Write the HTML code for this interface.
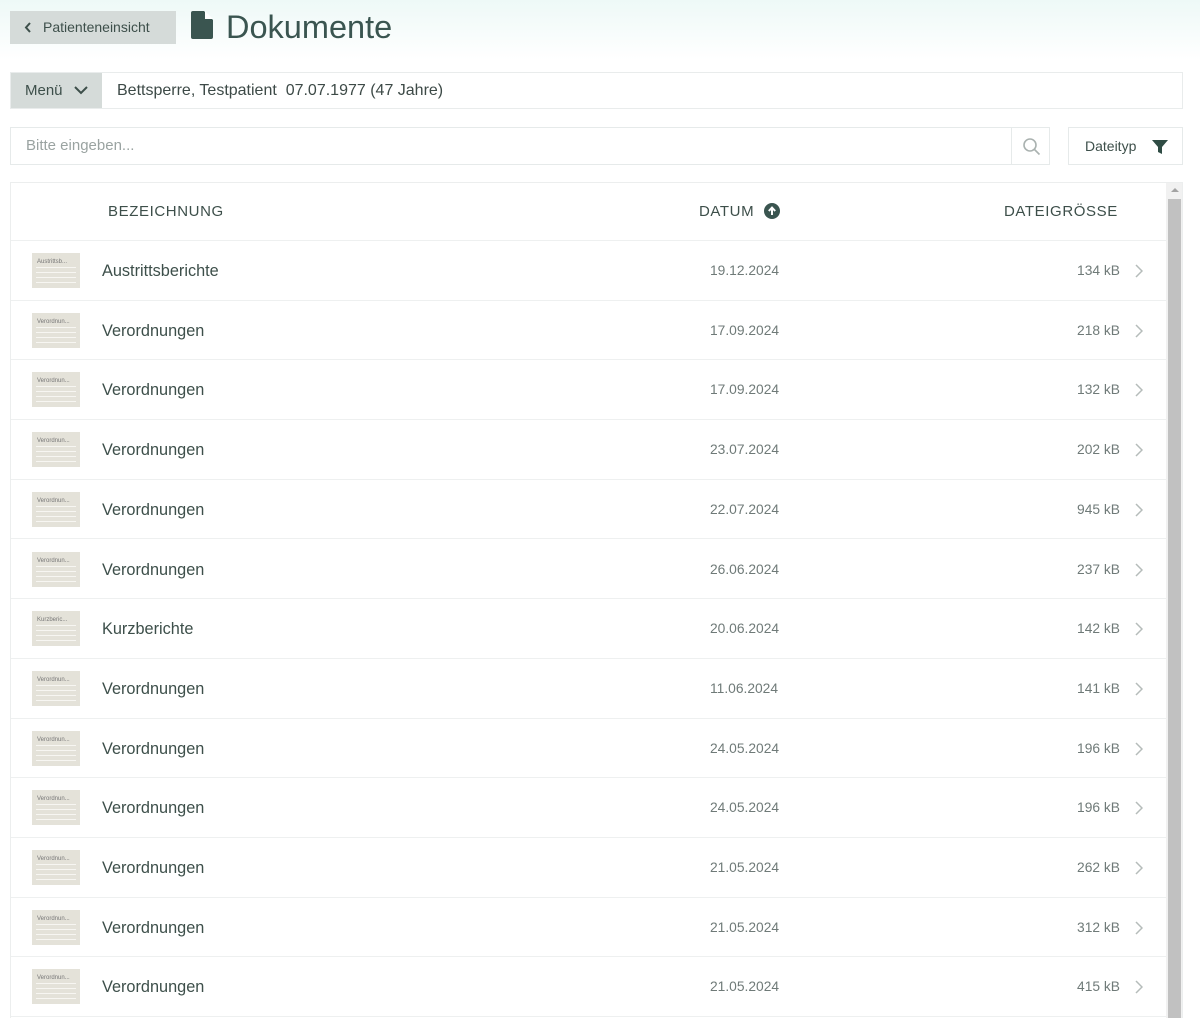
<!DOCTYPE html>
<html><head><meta charset="utf-8"><style>
*{box-sizing:border-box;margin:0;padding:0}
html,body{width:1200px;height:1018px;overflow:hidden}
body{background:#fff;font-family:"Liberation Sans",sans-serif;color:#3d4f4a;position:relative}
.topbg{position:absolute;left:0;top:0;width:1200px;height:60px;background:linear-gradient(#eef9f7,#fff)}
.back{position:absolute;left:10px;top:11px;width:166px;height:33px;background:#d5dbd9;font-size:14px;color:#3d4f4a;line-height:33px;padding-left:33px}
.back svg{position:absolute;left:14px;top:11px}
.title{position:absolute;left:191px;top:8px;font-size:32.5px;color:#3a5550;line-height:38px}
.title svg{position:absolute;left:0;top:3px}
.title span{margin-left:35px}
.pbar{position:absolute;left:10px;top:72px;width:1173px;height:37px;border:1px solid #e9ecec}
.menu{position:absolute;left:0;top:0;width:91px;height:35px;background:#d5dbd9;font-size:15px;line-height:35px;padding-left:14px}
.menu svg{position:absolute;left:63px;top:13px}
.pname{position:absolute;left:106px;top:0;line-height:35px;font-size:16px;color:#3d4a47}
.search{position:absolute;left:10px;top:127px;width:1040px;height:38px;border:1px solid #e6eaea}
.search .ph{position:absolute;left:15px;line-height:36px;font-size:15px;color:#9aa3a1}
.search .btn{position:absolute;right:0;top:0;width:38px;height:36px;border-left:1px solid #e6eaea}
.ftype{position:absolute;left:1068px;top:127px;width:115px;height:38px;border:1px solid #e6eaea;font-size:14px;line-height:36px;padding-left:16px}
.ftype svg{position:absolute;left:83px;top:12px}
.table{position:absolute;left:10px;top:182px;width:1173px;height:850px;border:1px solid #eceeee;overflow:hidden}
.sb{position:absolute;left:1155px;top:0;width:17px;height:850px;background:#f1f1f1}
.sb .thumb{position:absolute;left:2px;top:16px;width:13px;height:840px;background:#c1c1c1}
.sb .up{position:absolute;left:5px;top:5px;width:0;height:0;border-left:4px solid transparent;border-right:4px solid transparent;border-bottom:4px solid #a3a3a3}
.hdr{position:absolute;left:0;top:0;width:1155px;height:58px;border-bottom:1px solid #eef0f0;font-size:15px;color:#3d4f4a;letter-spacing:0.6px}
.hdr div{position:absolute;top:20px}
.row{position:absolute;left:0;width:1155px;height:59.7px;border-bottom:1px solid #eef0f0}
.th{position:absolute;left:21px;top:12px;width:48px;height:35px;background:#e4e2d9}
.th i{position:absolute;left:5px;top:6px;font-size:6px;font-style:normal;color:#777;white-space:nowrap}
.th b{position:absolute;left:4px;width:40px;height:1px;background:#f7f6f2}
.nm{position:absolute;left:91px;top:21px;font-size:16.3px;color:#3d4f4a}
.dt{position:absolute;left:699px;top:22px;font-size:13.8px;color:#6f7a78}
.sz{position:absolute;right:46px;top:22px;font-size:13.8px;color:#6f7a78}
.ch{position:absolute;left:1124px;top:23px}
</style></head><body>
<div class="topbg"></div>
<div class="back"><svg width="8" height="11" viewBox="0 0 8 11"><path d="M6 1L2 5.5 6 10" stroke="#3d4f4a" stroke-width="2" fill="none"/></svg>Patienteneinsicht</div>
<div class="title"><svg width="22" height="28" viewBox="0 0 22 28"><path d="M2 0h11l9 9v17a2 2 0 0 1-2 2H2a2 2 0 0 1-2-2V2a2 2 0 0 1 2-2z" fill="#3a5550"/><path d="M14 0v8h8" fill="#fff"/></svg><span>Dokumente</span></div>
<div class="pbar"><div class="menu">Menü<svg width="14" height="9" viewBox="0 0 14 9"><path d="M1 1l6 6 6-6" stroke="#3d4f4a" stroke-width="2" fill="none"/></svg></div><div class="pname">Bettsperre, Testpatient&nbsp; 07.07.1977 (47 Jahre)</div></div>
<div class="search"><div class="ph">Bitte eingeben...</div><div class="btn"><svg width="38" height="36" viewBox="0 0 38 36"><circle cx="18" cy="17" r="6" stroke="#aab2b0" stroke-width="1.6" fill="none"/><path d="M22.5 21.5l5 5" stroke="#aab2b0" stroke-width="1.6"/></svg></div></div>
<div class="ftype">Dateityp<svg width="16" height="14" viewBox="0 0 16 14"><path d="M0 0h16L10 7v7L6 12V7z" fill="#2f4c44"/></svg></div>
<div class="table">
<div class="hdr"><div style="left:97px">BEZEICHNUNG</div><div style="left:688px">DATUM</div><svg style="position:absolute;left:753px;top:20px" width="16" height="16" viewBox="0 0 16 16"><circle cx="8" cy="8" r="8" fill="#3a5550"/><path d="M8 12V5M4.8 8L8 4.6 11.2 8" stroke="#fff" stroke-width="2" fill="none"/></svg><div style="left:993px">DATEIGRÖSSE</div></div>
<div id="rows"></div>
<div class="sb"><div class="up"></div><div class="thumb"></div></div>
</div>
<script>
var d=[["Austrittsb...","Austrittsberichte","19.12.2024","134"],["Verordnun...","Verordnungen","17.09.2024","218"],["Verordnun...","Verordnungen","17.09.2024","132"],["Verordnun...","Verordnungen","23.07.2024","202"],["Verordnun...","Verordnungen","22.07.2024","945"],["Verordnun...","Verordnungen","26.06.2024","237"],["Kurzberic...","Kurzberichte","20.06.2024","142"],["Verordnun...","Verordnungen","11.06.2024","141"],["Verordnun...","Verordnungen","24.05.2024","196"],["Verordnun...","Verordnungen","24.05.2024","196"],["Verordnun...","Verordnungen","21.05.2024","262"],["Verordnun...","Verordnungen","21.05.2024","312"],["Verordnun...","Verordnungen","21.05.2024","415"]];
var h="";d.forEach(function(r,i){h+='<div class="row" style="top:'+(58+i*59.7)+'px"><div class="th"><i>'+r[0]+'</i><b style="top:14px"></b><b style="top:19px"></b><b style="top:24px"></b><b style="top:29px"></b></div><div class="nm">'+r[1]+'</div><div class="dt">'+r[2]+'</div><div class="sz">'+r[3]+' kB</div><svg class="ch" width="8" height="14" viewBox="0 0 8 14"><path d="M1 1l6 6-6 6" stroke="#b5bcba" stroke-width="1.5" fill="none"/></svg></div>'});
document.getElementById("rows").innerHTML=h;
</script>
</body></html>
